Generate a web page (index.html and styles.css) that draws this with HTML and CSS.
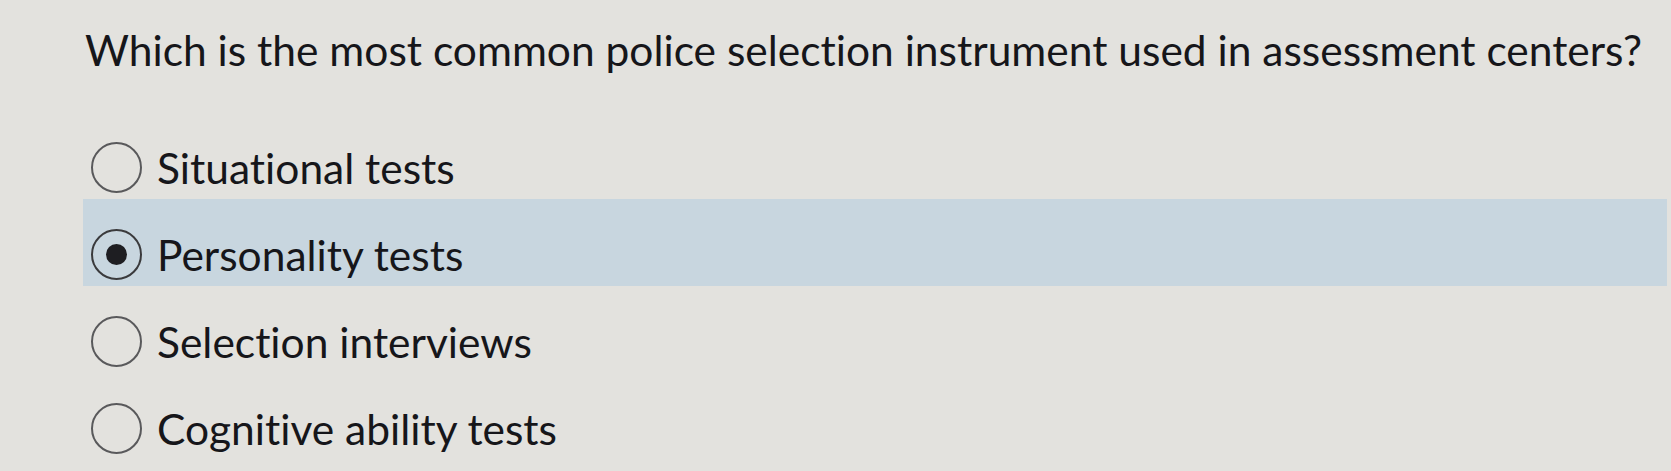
FILE: index.html
```html
<!DOCTYPE html>
<html lang="en">
<head>
<meta charset="utf-8">
<title>Question</title>
<link rel="stylesheet" href="styles.css">
</head>
<body>
<div class="page">
  <h1 class="question">Which is the most common police selection instrument used in assessment centers?</h1>
  <ul class="options">
    <li class="option"><span class="radio"></span><span class="label">Situational tests</span></li>
    <li class="option selected"><span class="radio"><span class="dot"></span></span><span class="label">Personality tests</span></li>
    <li class="option"><span class="radio"></span><span class="label">Selection interviews</span></li>
    <li class="option"><span class="radio"></span><span class="label">Cognitive ability tests</span></li>
  </ul>
</div>
</body>
</html>
```
FILE: styles.css
```css
html, body {
  margin: 0;
  padding: 0;
  background: #e3e2de;
}
.page {
  width: 1671px;
  height: 471px;
  overflow: hidden;
  font-family: Lato, "Noto Sans", sans-serif;
  font-variant-ligatures: none;
  color: #16161a;
  padding-left: 83px;
  box-sizing: border-box;
}
.question {
  margin: 0;
  padding: 24px 0 0 2px;
  font-size: 42.5px;
  font-weight: 400;
  line-height: 51px;
  height: 112px;
  box-sizing: border-box;
  white-space: nowrap;
}
.options {
  list-style: none;
  margin: 0;
  padding: 0;
}
.option {
  height: 87px;
  display: flex;
  align-items: flex-end;
  padding: 0 0 6px 8px;
  box-sizing: border-box;
  width: 1584px;
}
.option.selected {
  background: #c8d6df;
}
.radio {
  width: 51px;
  height: 51px;
  border: 2.5px solid #59595b;
  border-radius: 50%;
  box-sizing: border-box;
  display: flex;
  align-items: center;
  justify-content: center;
  flex: none;
}
.option.selected .radio {
  border-color: #3a3a3c;
}
.dot {
  width: 21px;
  height: 21px;
  border-radius: 50%;
  background: #1e1e22;
}
.label {
  margin-left: 15px;
  font-size: 42.5px;
  line-height: 51px;
  white-space: nowrap;
}
```
